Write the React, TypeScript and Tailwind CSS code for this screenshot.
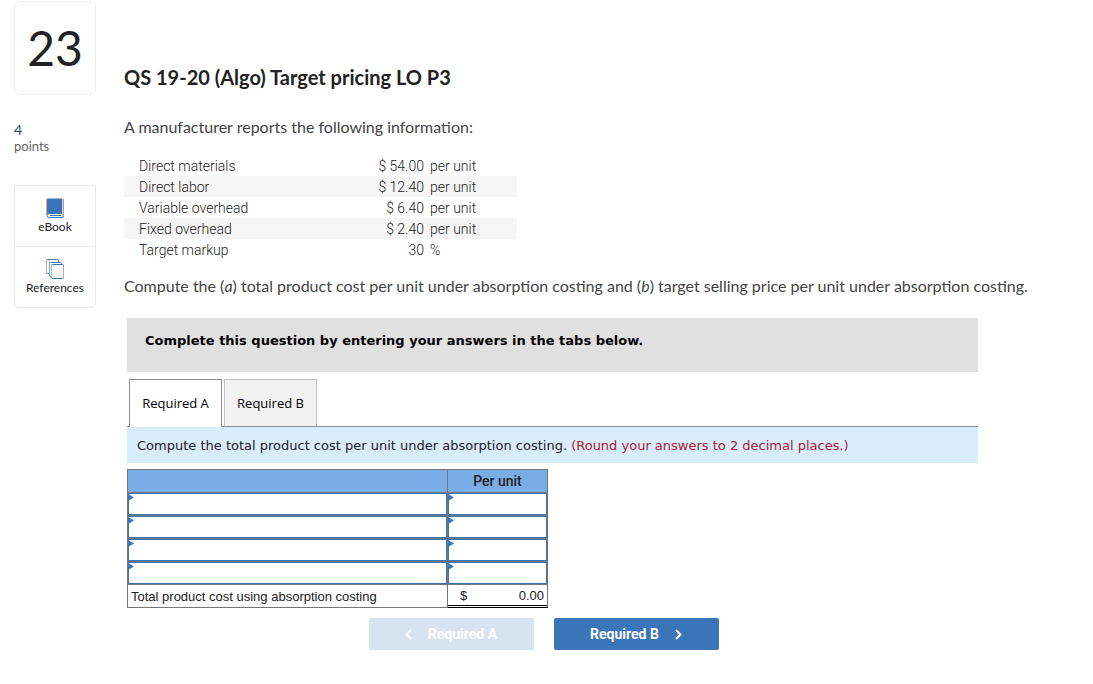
import React, { useState } from 'react';

interface CostRow {
  label: string;
  amount: string;
  unit: string;
}

const costRows: CostRow[] = [
  { label: 'Direct materials', amount: '$ 54.00', unit: 'per unit' },
  { label: 'Direct labor', amount: '$ 12.40', unit: 'per unit' },
  { label: 'Variable overhead', amount: '$ 6.40', unit: 'per unit' },
  { label: 'Fixed overhead', amount: '$ 2.40', unit: 'per unit' },
  { label: 'Target markup', amount: '30', unit: '%' },
];

type TabId = 'A' | 'B';

const BookIcon: React.FC = () => (
  <svg className="w-[18px] h-5" viewBox="0 0 18 20" fill="none" aria-hidden="true">
    <path d="M1 1.5A1 1 0 0 1 2 .5H16V15H3Q1 15 1 17Z" fill="#3a75ba" />
    <path d="M.5 17V2Q.5.5 2 .5" stroke="#e0a3a0" />
    <path d="M16.5 1V19" stroke="#b8d5ef" />
    <path d="M17.5 1V19.5" stroke="#d98f8c" />
    <path d="M16 15.5H3A2 2 0 0 0 3 19.5H17" stroke="#3a75ba" />
    <path d="M4 17.5H15" stroke="#3a75ba" />
  </svg>
);

const PagesIcon: React.FC = () => (
  <svg className="w-[18px] h-5" viewBox="0 0 18 20" fill="white" aria-hidden="true">
    <path d="M12.5 3V1.5Q12.5.5 11.5.5H1.5Q.5.5.5 1.5V13.5Q.5 14.5 1.5 14.5H3" stroke="#3a75ba" />
    <path d="M.5 13.5V1.5" stroke="#dc9c99" />
    <path d="M15.5 6V4.5Q15.5 3.5 14.5 3.5H4.5Q3.5 3.5 3.5 4.5V16.5Q3.5 17.5 4.5 17.5H6" stroke="#3a75ba" />
    <path d="M3.5 16.5V4.5" stroke="#6fa6df" />
    <path d="M6.5 19.5Q5.5 19.5 5.5 18.5V6.5Q5.5 5.5 6.5 5.5H16.5Q17.5 5.5 17.5 6.5V18.5Q17.5 19.5 16.5 19.5Z" stroke="#3a75ba" />
    <path d="M5.5 7V18.5" stroke="#86b9e8" />
    <path d="M17.5 7V18.5" stroke="#dc9c99" />
  </svg>
);

interface EntryCellProps {
  label: string;
}

const EntryCell: React.FC<EntryCellProps> = ({ label }) => (
  <td className="relative border border-[#757575] p-0">
    <input
      type="text"
      aria-label={label}
      className="block w-full h-[22px] border border-[#3a75ba] bg-white px-2 outline-none"
    />
    <svg className="absolute left-0 top-px w-[6px] h-[7px] pointer-events-none" viewBox="0 0 6 7" aria-hidden="true">
      <path d="M0 0L6 3.5L0 7Z" fill="#3a75ba" />
    </svg>
  </td>
);

const Sidebar: React.FC = () => (
  <aside className="w-[82px] shrink-0 font-['Lato',sans-serif]">
    <div className="flex h-[94px] items-center justify-center rounded-md border border-[#ebebeb] text-5xl text-[#222]">
      23
    </div>
    <div className="mt-[27px] text-sm leading-4">
      <div className="text-[#2a4f86]">4</div>
      <div className="text-[13px] text-[#666]">points</div>
    </div>
    <nav className="mt-[31px] rounded-b-md border border-[#e8e8e8] text-xs text-[#222]">
      <a href="#ebook" className="flex h-[61px] flex-col items-center border-b border-[#e8e8e8] pt-3">
        <BookIcon />
        <span className="mt-px leading-4">eBook</span>
      </a>
      <a href="#references" className="flex h-[60px] flex-col items-center pt-3">
        <PagesIcon />
        <span className="mt-px leading-4">References</span>
      </a>
    </nav>
  </aside>
);

const App: React.FC = () => {
  const [tab, setTab] = useState<TabId>('A');

  const tabClass = (id: TabId) =>
    tab === id
      ? 'relative z-10 -mb-px h-12 w-[93px] border border-b-0 border-[#8c8c8c] bg-white'
      : 'h-[47px] w-[93px] border border-b-0 border-[#c4c4c4] bg-[#f2f2f2] pt-px';

  return (
    <div className="flex min-h-screen gap-7 bg-white pl-[14px] pt-px">
      <Sidebar />

      <main className="min-w-0 flex-1 pr-5 pb-8 text-[#333]">
        <h1 className="mt-16 font-['Lato',sans-serif] text-xl leading-6 font-bold text-[#222]">
          QS 19-20 (Algo) Target pricing LO P3
        </h1>
        <p className="mt-[26px] font-['Lato',sans-serif] text-base leading-6 text-[#444]">
          A manufacturer reports the following information:
        </p>

        <table className="mt-4 w-[393px] font-['Roboto',sans-serif] text-sm font-light text-[#222]">
          <tbody>
            {costRows.map((row) => (
              <tr key={row.label} className="h-[21px] even:bg-[#f6f6f6]">
                <td className="p-0 pt-px pl-[15px] leading-5">{row.label}</td>
                <td className="w-20 p-0 pt-px text-right leading-5">{row.amount}</td>
                <td className="w-[93px] p-0 pt-px pl-[6px] leading-5">{row.unit}</td>
              </tr>
            ))}
          </tbody>
        </table>

        <p className="mt-[14px] font-['Lato',sans-serif] text-base leading-6 text-[#444]">
          Compute the (<i>a</i>) total product cost per unit under absorption costing and (<i>b</i>) target selling price per unit under absorption costing.
        </p>

        <section className="mt-5 ml-[3px] mr-[95px] font-['DejaVu_Sans',sans-serif] text-[13px] text-black">
          <h2 className="h-[54px] bg-[#e0e0e0] px-[18px] pt-[13px] text-[13px] leading-5 font-bold">
            Complete this question by entering your answers in the tabs below.
          </h2>

          <div role="tablist" className="mt-[7px] flex items-start gap-[2px] border-b border-[#8c8c8c] pl-[2px] font-['Open_Sans',sans-serif]">
            <button type="button" role="tab" aria-selected={tab === 'A'} onClick={() => setTab('A')} className={tabClass('A')}>
              Required A
            </button>
            <button type="button" role="tab" aria-selected={tab === 'B'} onClick={() => setTab('B')} className={tabClass('B')}>
              Required B
            </button>
          </div>

          <p className="bg-[#d9ecfb] px-[10px] pt-[9px] pb-[7px] leading-5 text-[#222]">
            Compute the total product cost per unit under absorption costing.{' '}
            <span className="text-[#b3202c]">(Round your answers to 2 decimal places.)</span>
          </p>

          <table className="mt-[6px] w-[421px] table-fixed border-collapse font-['Liberation_Sans',sans-serif] text-[13px] text-[#222]">
            <colgroup>
              <col />
              <col className="w-[100px]" />
            </colgroup>
            <thead>
              <tr className="h-[23px] bg-[#7aace6]">
                <th className="border border-[#757575] p-0" aria-label="Cost item" />
                <th className="border border-[#757575] p-0 font-['Roboto',sans-serif] text-sm leading-[22px] font-medium">Per unit</th>
              </tr>
            </thead>
            <tbody>
              {[1, 2, 3, 4].map((n) => (
                <tr key={n} className="h-[23px]">
                  <EntryCell label={`Cost item ${n}`} />
                  <EntryCell label={`Per unit amount ${n}`} />
                </tr>
              ))}
              <tr className="h-[23px]">
                <td className="border border-[#757575] p-0 pt-[2px] pl-[3px] leading-5">Total product cost using absorption costing</td>
                <td className="border border-[#757575] border-y-black p-0 align-top">
                  <div className="flex h-[21px] justify-between border-b border-black pr-[3px] pl-3 leading-[22px]">
                    <span>$</span>
                    <span>0.00</span>
                  </div>
                </td>
              </tr>
            </tbody>
          </table>

          <div className="mt-[10px] flex justify-center gap-5 pr-[18px] font-['Roboto',sans-serif] text-sm font-bold text-white">
            <button
              type="button"
              disabled={tab === 'A'}
              onClick={() => setTab('A')}
              className="flex h-8 w-[165px] items-center justify-center gap-4 rounded-xs bg-[#3a75ba] disabled:bg-[#d8e3f1]"
            >
              <svg className="w-[7px] h-[11px]" viewBox="0 0 7 11" fill="none" aria-hidden="true">
                <path d="M6 1L1.5 5.5L6 10" stroke="currentColor" strokeWidth="2" />
              </svg>
              Required A
            </button>
            <button
              type="button"
              disabled={tab === 'B'}
              onClick={() => setTab('B')}
              className="flex h-8 w-[165px] items-center justify-center gap-4 rounded-xs bg-[#3a75ba] disabled:bg-[#d8e3f1]"
            >
              Required B
              <svg className="w-[7px] h-[11px]" viewBox="0 0 7 11" fill="none" aria-hidden="true">
                <path d="M1 1L5.5 5.5L1 10" stroke="currentColor" strokeWidth="2" />
              </svg>
            </button>
          </div>
        </section>
      </main>
    </div>
  );
};

export default App;
